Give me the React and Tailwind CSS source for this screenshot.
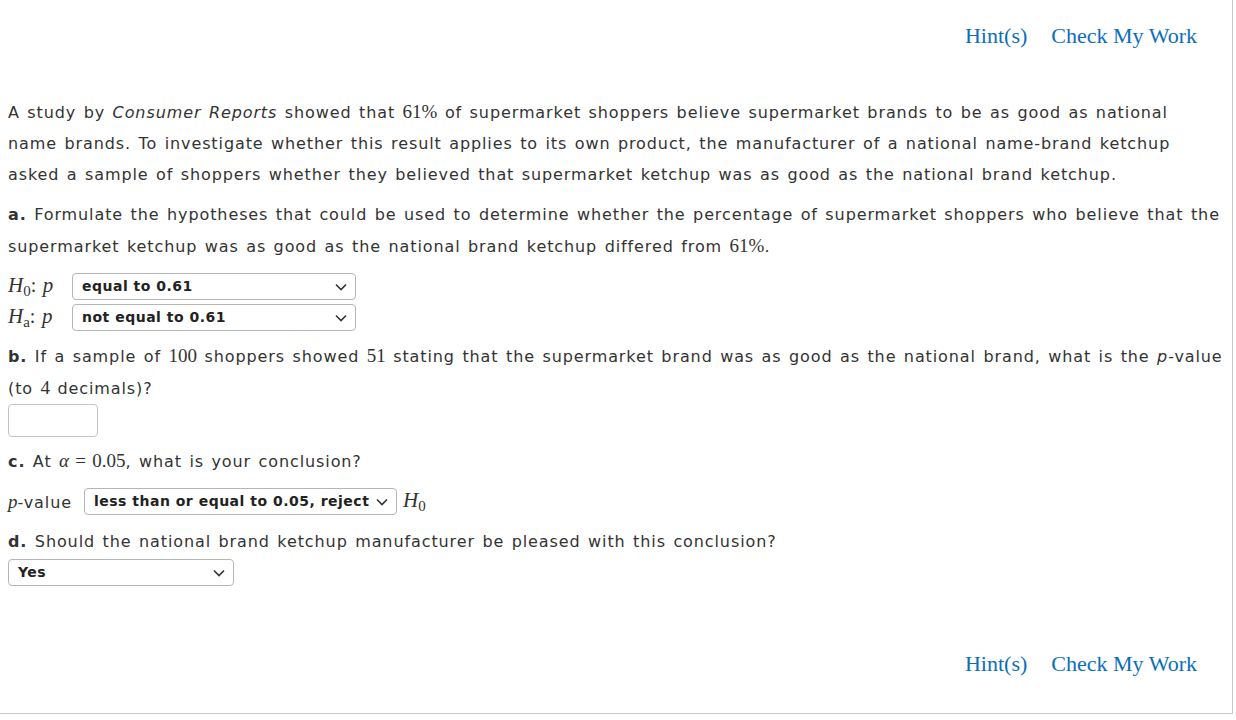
import React from 'react'

const body = { fontFamily: '"DejaVu Sans", Verdana, sans-serif' }
const serif = { fontFamily: '"Liberation Serif", "Times New Roman", serif' }

function M({ children, italic }) {
  return (
    <span className={`text-[19px] tracking-normal ${italic ? 'italic' : ''}`} style={serif}>
      {children}
    </span>
  )
}

function Chevron() {
  return (
    <svg width="12" height="8" viewBox="0 0 12 8" className="shrink-0">
      <polyline points="1,1.5 6,6.5 11,1.5" fill="none" stroke="#333" strokeWidth="1.6" />
    </svg>
  )
}

function Select({ value, width }) {
  return (
    <div
      className="flex items-center justify-between h-[27px] border border-[#b5b5b5] rounded-[4px] bg-white pl-[9px] pr-[8px] text-[14px] font-bold tracking-[0.5px] [word-spacing:0px] text-[#222]"
      style={{ width }}
    >
      <span>{value}</span>
      <Chevron />
    </div>
  )
}

function Links() {
  return (
    <div className="flex justify-end gap-[24px] pr-[35px] text-[22px] leading-[28px] text-[#0b6ebd]" style={serif}>
      <a href="#">Hint(s)</a>
      <a href="#">Check My Work</a>
    </div>
  )
}

function H({ sub }) {
  return (
    <span className="tracking-normal" style={serif}>
      <span className="text-[21px] italic">H</span>
      <span className="text-[15px] relative top-[4px]">{sub}</span>
    </span>
  )
}

export default function App() {
  return (
    <div className="flex flex-col w-[1233px] h-[714px] border-r border-b border-[#c8c8c8] bg-white text-[#333]" style={body}>
      <div className="pt-[22px]">
        <Links />
      </div>

      <div className="px-[8px] pt-[46px] text-[16px] leading-[31px] tracking-[0.9px] [word-spacing:1.5px]">
        <p>
          A study by <i>Consumer Reports</i> showed that <M>61%</M> of supermarket shoppers believe supermarket brands to be as good as national name brands. To investigate whether this result applies to its own product, the manufacturer of a national name-brand ketchup asked a sample of shoppers whether they believed that supermarket ketchup was as good as the national brand ketchup.
        </p>

        <p className="mt-[9px]">
          <b>a.</b> Formulate the hypotheses that could be used to determine whether the percentage of supermarket shoppers who believe that the supermarket ketchup was as good as the national brand ketchup differed from <M>61%</M>.
        </p>

        <div className="flex items-center h-[31px] mt-[9px]">
          <span className="w-[64px] shrink-0 tracking-normal" style={serif}>
            <H sub="0" />
            <span className="text-[20px]">: </span>
            <span className="text-[21px] italic">p</span>
          </span>
          <Select value="equal to 0.61" width={284} />
        </div>
        <div className="flex items-center h-[31px]">
          <span className="w-[64px] shrink-0 tracking-normal" style={serif}>
            <H sub="a" />
            <span className="text-[20px]">: </span>
            <span className="text-[21px] italic">p</span>
          </span>
          <Select value="not equal to 0.61" width={284} />
        </div>

        <p className="mt-[7px]">
          <b>b.</b> If a sample of <M>100</M> shoppers showed <M>51</M> stating that the supermarket brand was as good as the national brand, what is the <i>p</i>-value (to <M>4</M> decimals)?
        </p>
        <input
          type="text"
          className="block w-[90px] h-[33px] border border-[#c4c4c4] rounded-[4px] bg-white"
        />

        <p className="mt-[8px]">
          <b>c.</b> At <M><i>α</i> = 0.05</M>, what is your conclusion?
        </p>
        <div className="flex items-center h-[31px] mt-[9px]">
          <span className="mr-[12px]">
            <M italic>p</M>-value
          </span>
          <Select value="less than or equal to 0.05, reject" width={313} />
          <span className="ml-[6px]">
            <H sub="0" />
          </span>
        </div>

        <p className="mt-[9px]">
          <b>d.</b> Should the national brand ketchup manufacturer be pleased with this conclusion?
        </p>
        <div className="mt-[2px]">
          <Select value="Yes" width={226} />
        </div>
      </div>

      <div className="mt-auto pb-[35px]">
        <Links />
      </div>
    </div>
  )
}
